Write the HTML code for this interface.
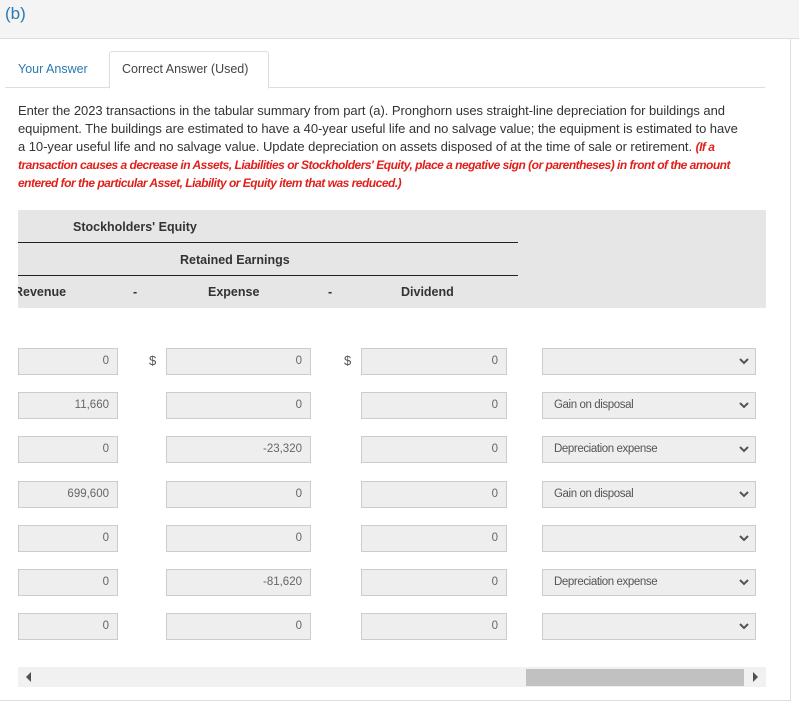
<!DOCTYPE html>
<html><head><style>
body{margin:0;width:799px;height:705px;background:#fff;font-family:"Liberation Sans",sans-serif;position:relative;overflow:hidden;color:#333}
.top{position:absolute;left:0;top:0;width:799px;height:38px;background:#f4f4f4;border-bottom:1px solid #ddd}
.top span{position:absolute;left:5px;top:4px;font-size:17px;color:#2a7ab0}
.card{position:absolute;left:0;top:39px;width:790px;height:661px;border-right:1px solid #ddd;border-bottom:1px solid #ddd}
.ab{position:absolute}
.tabline{position:absolute;left:5px;top:87px;width:760px;border-top:1px solid #ddd}
.tab{position:absolute;left:109px;top:51px;width:158px;height:36px;border:1px solid #ddd;border-bottom:1px solid #fff;background:#fff;border-radius:3px 3px 0 0}
p{position:absolute;left:18px;top:102px;width:790px;margin:0;font-size:13px;line-height:18px;color:#333;white-space:nowrap;letter-spacing:-0.05px}
.red{color:#e0201b;font-weight:bold;font-style:italic;font-size:12px;letter-spacing:-0.5px}
.hdr{position:absolute;left:18px;top:210px;width:748px;height:98px;background:#e6e6e6}
.hdr .t{position:absolute;font-size:12.5px;font-weight:bold;color:#333}
.ln{position:absolute;left:0;width:500px;border-top:1px solid #222}
.in{position:absolute;height:25px;background:#eee;border:1px solid #ccc;font-size:11.5px;color:#666;text-align:right;line-height:25px;box-sizing:content-box;padding-right:8px}
.sel{position:absolute;left:542px;width:212px;height:25px;background:#eee;border:1px solid #ccc;font-size:11.5px;color:#555;line-height:25px}
.sel span{position:absolute;left:11px;letter-spacing:-0.4px}
.sel svg{position:absolute;right:6px;top:9px}
.d{position:absolute;font-size:13px;color:#555}
</style></head><body>
<div class="top"><span>(b)</span></div>
<div class="card"></div>
<div class="tabline"></div>
<div class="tab"></div>
<div class="ab" style="left:18px;top:62px;font-size:12.5px;color:#2a7ab0">Your Answer</div>
<div class="ab" style="left:122px;top:62px;font-size:12.5px;color:#444">Correct Answer (Used)</div>
<p>Enter the 2023 transactions in the tabular summary from part (a). Pronghorn uses straight-line depreciation for buildings and<br>equipment. The buildings are estimated to have a 40-year useful life and no salvage value; the equipment is estimated to have<br>a 10-year useful life and no salvage value. Update depreciation on assets disposed of at the time of sale or retirement. <span class="red">(If a</span><br><span class="red">transaction causes a decrease in Assets, Liabilities or Stockholders' Equity, place a negative sign (or parentheses) in front of the amount</span><br><span class="red">entered for the particular Asset, Liability or Equity item that was reduced.)</span></p>
<div class="hdr">
<div class="t" style="left:55px;top:10px">Stockholders' Equity</div>
<div class="ln" style="top:32px"></div>
<div class="t" style="left:162px;top:43px">Retained Earnings</div>
<div class="ln" style="top:65px"></div>
<div class="t" style="left:-4px;top:75px">Revenue</div>
<div class="t" style="left:115px;top:75px">-</div>
<div class="t" style="left:190px;top:75px">Expense</div>
<div class="t" style="left:310px;top:75px">-</div>
<div class="t" style="left:383px;top:75px">Dividend</div>
</div>
<div class="ab" style="left:0;top:210px;width:18px;height:98px;background:#fff"></div>

<div class="d" style="left:149px;top:353px">$</div>
<div class="d" style="left:344px;top:353px">$</div>

<div class="in" style="left:18px;top:348px;width:90px">0</div>
<div class="in" style="left:166px;top:348px;width:135px">0</div>
<div class="in" style="left:361px;top:348px;width:136px">0</div>
<div class="sel" style="top:348px"><span></span><svg width="10" height="7"><path d="M1 1l4 4 4-4" stroke="#555" stroke-width="2" fill="none"/></svg></div>

<div class="in" style="left:18px;top:392px;width:90px">11,660</div>
<div class="in" style="left:166px;top:392px;width:135px">0</div>
<div class="in" style="left:361px;top:392px;width:136px">0</div>
<div class="sel" style="top:392px"><span>Gain on disposal</span><svg width="10" height="7"><path d="M1 1l4 4 4-4" stroke="#555" stroke-width="2" fill="none"/></svg></div>

<div class="in" style="left:18px;top:436px;width:90px">0</div>
<div class="in" style="left:166px;top:436px;width:135px">-23,320</div>
<div class="in" style="left:361px;top:436px;width:136px">0</div>
<div class="sel" style="top:436px"><span>Depreciation expense</span><svg width="10" height="7"><path d="M1 1l4 4 4-4" stroke="#555" stroke-width="2" fill="none"/></svg></div>

<div class="in" style="left:18px;top:481px;width:90px">699,600</div>
<div class="in" style="left:166px;top:481px;width:135px">0</div>
<div class="in" style="left:361px;top:481px;width:136px">0</div>
<div class="sel" style="top:481px"><span>Gain on disposal</span><svg width="10" height="7"><path d="M1 1l4 4 4-4" stroke="#555" stroke-width="2" fill="none"/></svg></div>

<div class="in" style="left:18px;top:525px;width:90px">0</div>
<div class="in" style="left:166px;top:525px;width:135px">0</div>
<div class="in" style="left:361px;top:525px;width:136px">0</div>
<div class="sel" style="top:525px"><span></span><svg width="10" height="7"><path d="M1 1l4 4 4-4" stroke="#555" stroke-width="2" fill="none"/></svg></div>

<div class="in" style="left:18px;top:569px;width:90px">0</div>
<div class="in" style="left:166px;top:569px;width:135px">-81,620</div>
<div class="in" style="left:361px;top:569px;width:136px">0</div>
<div class="sel" style="top:569px"><span>Depreciation expense</span><svg width="10" height="7"><path d="M1 1l4 4 4-4" stroke="#555" stroke-width="2" fill="none"/></svg></div>

<div class="in" style="left:18px;top:613px;width:90px">0</div>
<div class="in" style="left:166px;top:613px;width:135px">0</div>
<div class="in" style="left:361px;top:613px;width:136px">0</div>
<div class="sel" style="top:613px"><span></span><svg width="10" height="7"><path d="M1 1l4 4 4-4" stroke="#555" stroke-width="2" fill="none"/></svg></div>

<div class="ab" style="left:18px;top:667px;width:748px;height:20px;background:#f1f1f1"></div>
<div class="ab" style="left:526px;top:669px;width:218px;height:17px;background:#c1c1c1"></div>
<svg class="ab" style="left:24px;top:671px" width="8" height="12"><path d="M7 1L2 6l5 5z" fill="#505050"/></svg>
<svg class="ab" style="left:752px;top:671px" width="8" height="12"><path d="M1 1l5 5-5 5z" fill="#505050"/></svg>
</body></html>
